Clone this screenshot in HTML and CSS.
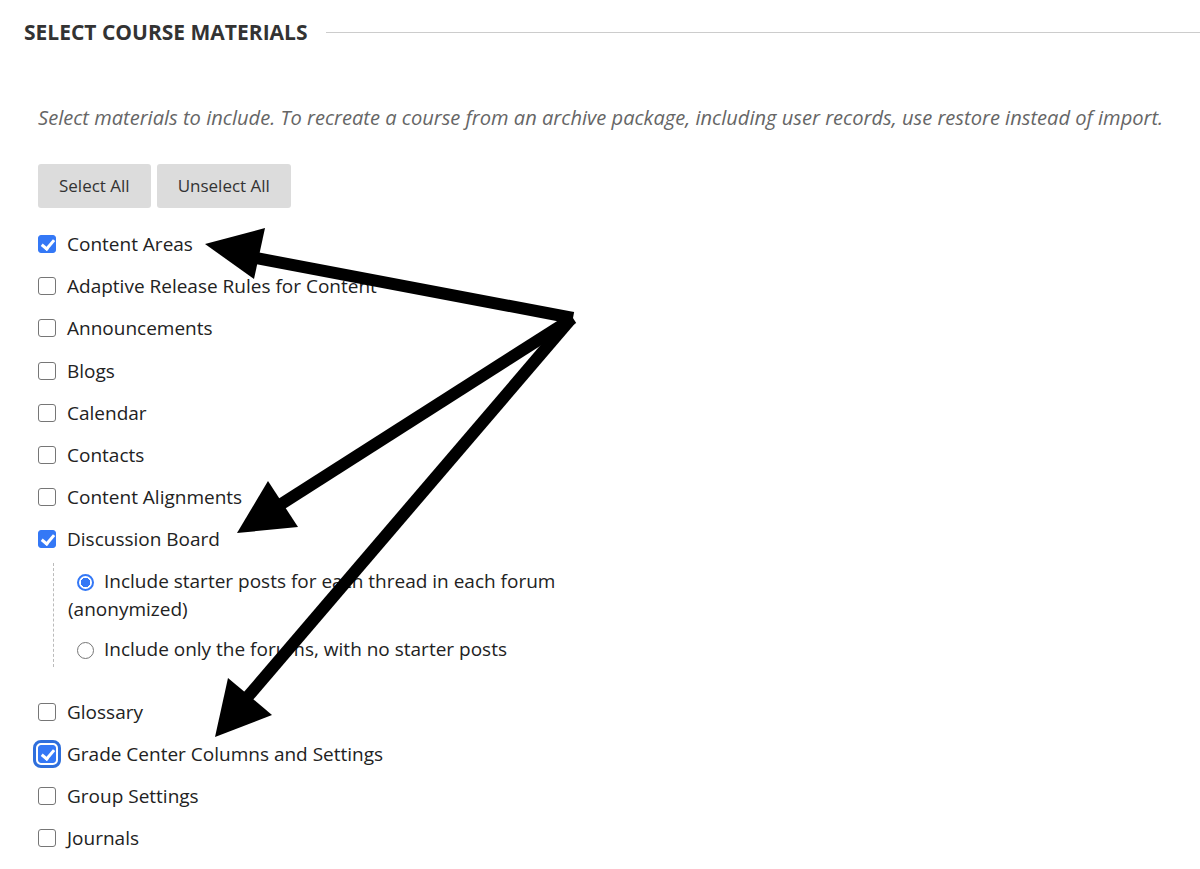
FILE: index.html
```html
<!DOCTYPE html>
<html lang="en">
<head>
<meta charset="utf-8">
<title>Select Course Materials</title>
<link rel="stylesheet" href="styles.css">
</head>
<body>
<div class="page">
  <div class="section-head">
    <h2 class="section-title">SELECT COURSE MATERIALS</h2>
    <span class="section-rule"></span>
  </div>
  <p class="hint">Select materials to include. To recreate a course from an archive package, including user records, use restore instead of import.</p>
  <div class="btn-row">
    <button class="btn">Select All</button>
    <button class="btn">Unselect All</button>
  </div>
  <ul class="list">
    <li class="item"><span class="cb checked"></span><span class="label">Content Areas</span></li>
    <li class="item"><span class="cb"></span><span class="label">Adaptive Release Rules for Content</span></li>
    <li class="item"><span class="cb"></span><span class="label">Announcements</span></li>
    <li class="item"><span class="cb"></span><span class="label">Blogs</span></li>
    <li class="item"><span class="cb"></span><span class="label">Calendar</span></li>
    <li class="item"><span class="cb"></span><span class="label">Contacts</span></li>
    <li class="item"><span class="cb"></span><span class="label">Content Alignments</span></li>
    <li class="item"><span class="cb checked"></span><span class="label">Discussion Board</span></li>
    <li class="sub">
      <div class="opt"><span class="radio on"></span>Include starter posts for each thread in each forum (anonymized)</div>
      <div class="opt"><span class="radio"></span>Include only the forums, with no starter posts</div>
    </li>
    <li class="item"><span class="cb"></span><span class="label">Glossary</span></li>
    <li class="item"><span class="cb checked focus"></span><span class="label">Grade Center Columns and Settings</span></li>
    <li class="item"><span class="cb"></span><span class="label">Group Settings</span></li>
    <li class="item"><span class="cb"></span><span class="label">Journals</span></li>
  </ul>
</div>
<svg class="arrows" width="1200" height="869" viewBox="0 0 1200 869">
  <g fill="#000" stroke="none">
    <line x1="573" y1="318" x2="240" y2="255" stroke="#000" stroke-width="12"/>
    <polygon points="205,244 265,228 254,279"/>
    <line x1="573" y1="318" x2="275" y2="508" stroke="#000" stroke-width="12"/>
    <polygon points="237,533 268,481 298,527"/>
    <line x1="570" y1="320" x2="245" y2="700" stroke="#000" stroke-width="12"/>
    <polygon points="215,737 228,678 272,715"/>
  </g>
</svg>
</body>
</html>
```
FILE: styles.css
```css
html, body {
  margin: 0;
  padding: 0;
  background: #fff;
}
body {
  font-family: "Open Sans", "Liberation Sans", sans-serif;
  color: #222;
  width: 1200px;
  height: 869px;
  overflow: hidden;
  position: relative;
}
.page {
  padding: 17px 0 0 24px;
}
.section-head {
  display: flex;
  align-items: center;
  gap: 18px;
}
.section-title {
  margin: 0;
  font-size: 21px;
  font-weight: 700;
  color: #333;
  line-height: 30px;
}
.section-rule {
  flex: 1;
  height: 1px;
  background: #ccc;
  margin-top: 1px;
}
.hint {
  margin: 57px 0 0 14px;
  font-size: 20.1px;
  font-style: italic;
  color: #666;
  line-height: 28px;
}
.btn-row {
  display: flex;
  gap: 6px;
  margin: 32px 0 0 14px;
}
.btn {
  font-family: "Open Sans", "Liberation Sans", sans-serif;
  font-size: 17px;
  color: #333;
  background: #dcdcdc;
  border: none;
  border-radius: 3px;
  height: 44px;
  padding: 0 21px 1px;
}
.list {
  list-style: none;
  margin: 15px 0 0 14px;
  padding: 0;
}
.item {
  display: flex;
  align-items: center;
  height: 42.2px;
}
.label {
  font-size: 19px;
  color: #222;
  margin-left: 11px;
}
.cb {
  width: 18px;
  height: 18px;
  box-sizing: border-box;
  border: 1px solid #767676;
  border-radius: 3px;
  background: #fff;
  position: relative;
  flex: none;
}
.cb.checked {
  background: #3478f6;
  border-color: #3478f6;
}
.cb.checked::after {
  content: "";
  position: absolute;
  left: 5px;
  top: 1px;
  width: 5px;
  height: 10px;
  border: solid #fff;
  border-width: 0 3px 3px 0;
  transform: rotate(40deg);
}
.cb.focus {
  outline: 3px solid #2f6fdc;
  outline-offset: 2px;
}
.sub {
  margin: 2px 0 24px 15px;
  border-left: 1px dashed #bbb;
  padding: 4px 0 4px 14px;
}
.opt {
  font-size: 19px;
  line-height: 28px;
  color: #222;
  width: 500px;
}
.opt + .opt {
  margin-top: 12px;
}
.radio {
  display: inline-block;
  width: 17px;
  height: 17px;
  box-sizing: border-box;
  border: 1px solid #767676;
  border-radius: 50%;
  margin: 0 10px 0 9px;
  vertical-align: -3px;
  background: #fff;
}
.radio.on {
  border: 2px solid #3478f6;
  background: radial-gradient(circle, #3478f6 0 4.5px, #fff 5px);
}
.arrows {
  position: absolute;
  left: 0;
  top: 0;
  pointer-events: none;
}
```
